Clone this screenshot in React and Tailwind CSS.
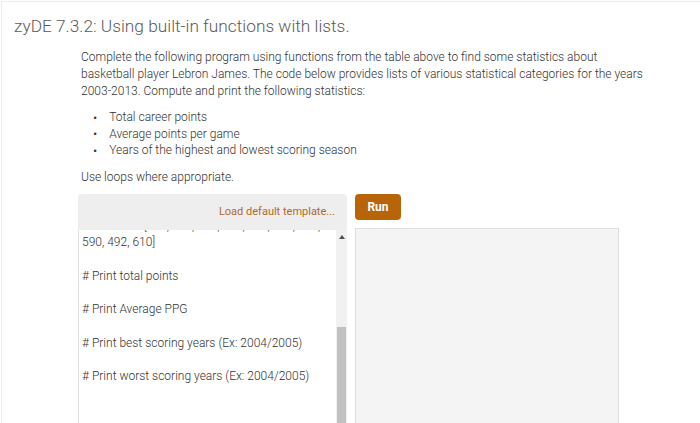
import React from "react";

const bullets = [
  "Total career points",
  "Average points per game",
  "Years of the highest and lowest scoring season",
];

const code = [
  "rebounds = [192, 556, 556, 520, 592, 613, 554,",
  "590, 492, 610]",
  "",
  "# Print total points",
  "",
  "# Print Average PPG",
  "",
  "# Print best scoring years (Ex: 2004/2005)",
  "",
  "# Print worst scoring years (Ex: 2004/2005)",
  "",
  "",
];

export default function App() {
  return (
    <div
      className="h-[423px] w-[700px] overflow-hidden bg-white"
      style={{ fontFamily: "Roboto, 'Liberation Sans', sans-serif" }}
    >
      <div className="ml-px mt-px h-[430px] border-l border-t border-[#ececec]">
        <h2 className="pl-[12px] pt-[12px] text-[17.3px] font-light leading-[24px] text-[#5a5a5a]">
          zyDE 7.3.2: Using built-in functions with lists.
        </h2>

        <div className="pl-[79px] pt-[11px] text-[12px] font-light text-[#333]">
          <p className="w-[568px] leading-[17px]">
            Complete the following program using functions from the table above to find some statistics about
            basketball player Lebron James. The code below provides lists of various statistical categories for the years
            2003-2013. Compute and print the following statistics:
          </p>
          <ul className="mt-[9px] pl-[12px] leading-[16.5px]">
            {bullets.map((b, i) => (
              <li key={i} className="flex items-center gap-[12px]">
                <span className="text-[13px] leading-none">•</span>
                {b}
              </li>
            ))}
          </ul>
          <p className="mt-[10px] leading-[17px]">Use loops where appropriate.</p>
        </div>

        <div className="mt-[8px] flex gap-[8px] pl-[76px]">
          <div className="w-[269px]">
            <div className="flex h-[36px] items-center justify-end rounded-t-sm bg-[#eeeeee] pr-[12px] pt-[2px]">
              <span className="text-[11px] text-[#b06a2c]">Load default template...</span>
            </div>
            <div className="flex h-[220px] border-l border-[#e2e2e2] bg-white">
              <div className="flex-1 overflow-hidden pl-[3px]">
                <div className="-mt-[12px] text-[12px] font-light leading-[16.75px] text-[#333]">
                  {code.map((line, i) => (
                    <div key={i} className="h-[16.75px] whitespace-pre">
                      {line}
                    </div>
                  ))}
                </div>
              </div>
              <div className="flex w-[11px] flex-col bg-[#f1f1f1]">
                <div className="flex h-[14px] items-start justify-center pt-[5px]">
                  <div className="h-0 w-0 border-x-[3px] border-b-[4px] border-x-transparent border-b-[#505050]" />
                </div>
                <div className="mx-[1px] mt-[83px] flex-1 bg-[#c1c1c1]" />
              </div>
            </div>
          </div>

          <div className="flex flex-col">
            <button className="h-[26px] w-[46px] rounded-sm bg-[#b8650a] text-[12px] font-bold text-white">
              Run
            </button>
            <div className="mt-[8px] h-[220px] w-[264px] border border-[#dedede] bg-[#f4f4f4]" />
          </div>
        </div>
      </div>
    </div>
  );
}
